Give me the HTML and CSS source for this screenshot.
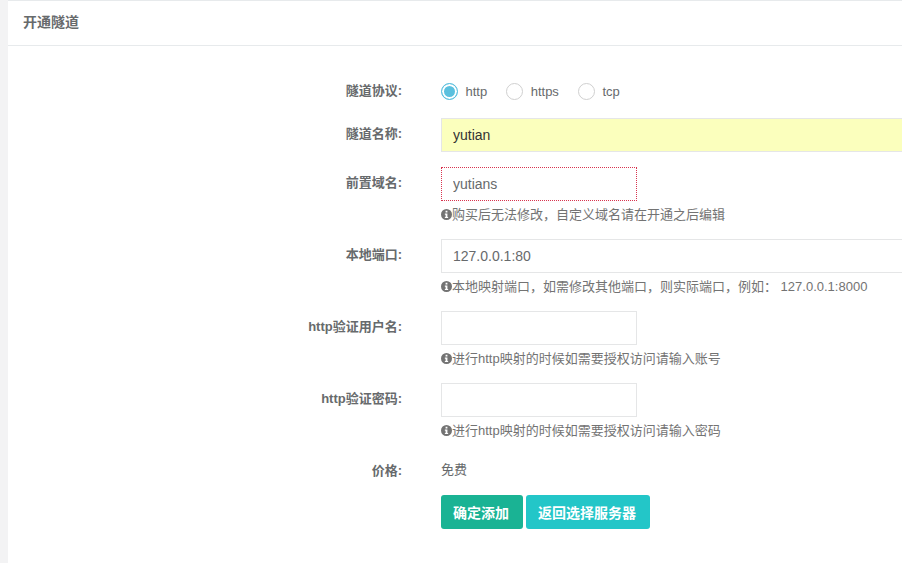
FILE: index.html
```html
<!DOCTYPE html>
<html lang="zh-CN">
<head>
    <meta charset="UTF-8">
    <meta name="viewport" content="width=device-width, initial-scale=1.0">
    <title>开通隧道</title>
    <link rel="stylesheet" href="styles.css">
</head>
<body>
    <svg class="icon-defs" width="0" height="0" aria-hidden="true">
        <symbol id="info" viewBox="0 0 12 12">
            <path fill-rule="evenodd" d="M6 0a6 6 0 1 1 0 12A6 6 0 0 1 6 0zM5 1.9v1.8h2V1.9zM4.2 5v1.2H5v2.4h-.8v1.3h3.6V8.6H7V5z"/>
        </symbol>
    </svg>
    <div class="panel">
        <div class="panel-title">开通隧道</div>
        <form class="tunnel-form">
            <div class="form-row radio-row">
                <label class="row-label">隧道协议:</label>
                <div class="radio-group">
                    <span class="radio-item"><span class="radio checked"></span>http</span>
                    <span class="radio-item"><span class="radio"></span>https</span>
                    <span class="radio-item"><span class="radio"></span>tcp</span>
                </div>
            </div>
            <div class="form-row">
                <label class="row-label" for="name">隧道名称:</label>
                <div><input class="text-input wide autofilled" id="name" type="text" value="yutian"></div>
            </div>
            <div class="form-row">
                <label class="row-label" for="domain">前置域名:</label>
                <div>
                    <input class="text-input invalid" id="domain" type="text" value="yutians">
                    <p class="help"><svg class="info-icon"><use href="#info"/></svg>购买后无法修改，自定义域名请在开通之后编辑</p>
                </div>
            </div>
            <div class="form-row">
                <label class="row-label" for="port">本地端口:</label>
                <div>
                    <input class="text-input wide" id="port" type="text" value="127.0.0.1:80">
                    <p class="help"><svg class="info-icon"><use href="#info"/></svg>本地映射端口，如需修改其他端口，则实际端口，例如： 127.0.0.1:8000</p>
                </div>
            </div>
            <div class="form-row">
                <label class="row-label" for="user">http验证用户名:</label>
                <div>
                    <input class="text-input" id="user" type="text">
                    <p class="help"><svg class="info-icon"><use href="#info"/></svg>进行http映射的时候如需要授权访问请输入账号</p>
                </div>
            </div>
            <div class="form-row">
                <label class="row-label" for="pass">http验证密码:</label>
                <div>
                    <input class="text-input" id="pass" type="text">
                    <p class="help"><svg class="info-icon"><use href="#info"/></svg>进行http映射的时候如需要授权访问请输入密码</p>
                </div>
            </div>
            <div class="form-row price-row">
                <label class="row-label">价格:</label>
                <div class="price">免费</div>
            </div>
            <div class="form-row">
                <div></div>
                <div class="actions">
                    <button class="btn btn-primary" type="button">确定添加</button>
                    <button class="btn btn-info" type="button">返回选择服务器</button>
                </div>
            </div>
        </form>
    </div>
</body>
</html>
```

FILE: styles.css
```css
html, body {
    height: 100%;
}
body {
    margin: 0;
    padding-left: 8px;
    background-color: #f3f3f4;
    color: #676a6c;
    font-family: "Liberation Sans", "Noto Sans CJK SC", sans-serif;
    font-size: 13px;
    overflow: hidden;
}
.icon-defs {
    display: block;
}
.panel {
    min-height: 100%;
    background-color: #fff;
    border-top: 1px solid #e7eaec;
    box-sizing: border-box;
    overflow: hidden;
}
.panel-title {
    height: 44px;
    line-height: 43px;
    padding-left: 15px;
    border-bottom: 1px solid #e7eaec;
    font-size: 14px;
    font-weight: bold;
}
.tunnel-form {
    padding-top: 33px;
}
.form-row {
    display: grid;
    grid-template-columns: 394px minmax(0, 1fr);
    column-gap: 39px;
    margin-bottom: 15px;
}
.row-label {
    padding-top: 7px;
    line-height: 18px;
    text-align: right;
    font-weight: bold;
}
.radio-row .row-label {
    padding-top: 3px;
}
.radio-group {
    display: flex;
    align-items: center;
    gap: 19px;
    height: 24px;
}
.radio-item {
    display: flex;
    align-items: center;
    gap: 7.5px;
}
.radio {
    display: block;
    width: 17px;
    height: 17px;
    border: 1px solid #d0d0d0;
    border-radius: 50%;
    box-sizing: border-box;
    background-color: #fff;
}
.radio.checked {
    border-color: #5bc0de;
    background-color: #5bc0de;
    box-shadow: inset 0 0 0 2px #fff;
}
.text-input {
    display: block;
    width: 196px;
    height: 34px;
    padding: 6px 11px;
    border: 1px solid #e5e6e7;
    box-sizing: border-box;
    background-color: #fff;
    color: #676a6c;
    font-family: inherit;
    font-size: 14px;
    outline: none;
}
.text-input.wide {
    width: calc(100% + 2px);
}
.text-input.autofilled {
    background-color: #fbffbd;
    color: #333;
}
.text-input.invalid {
    border: 1px dotted #d8344f;
}
.help {
    margin: 5px 0 0;
    height: 18px;
    line-height: 18px;
    color: #737373;
}
.info-icon {
    width: 11px;
    height: 11px;
    fill: #737373;
    vertical-align: -1px;
}
.price-row {
    height: 25px;
}
.price {
    padding-top: 7px;
    line-height: 16px;
}
.actions {
    display: flex;
    gap: 3px;
}
.btn {
    height: 34px;
    padding: 0 14px 0 12px;
    border: none;
    border-radius: 3px;
    color: #fff;
    font-family: inherit;
    font-size: 14px;
    font-weight: bold;
    cursor: pointer;
}
.btn-primary {
    background-color: #1ab394;
}
.btn-info {
    background-color: #23c6c8;
}
```
